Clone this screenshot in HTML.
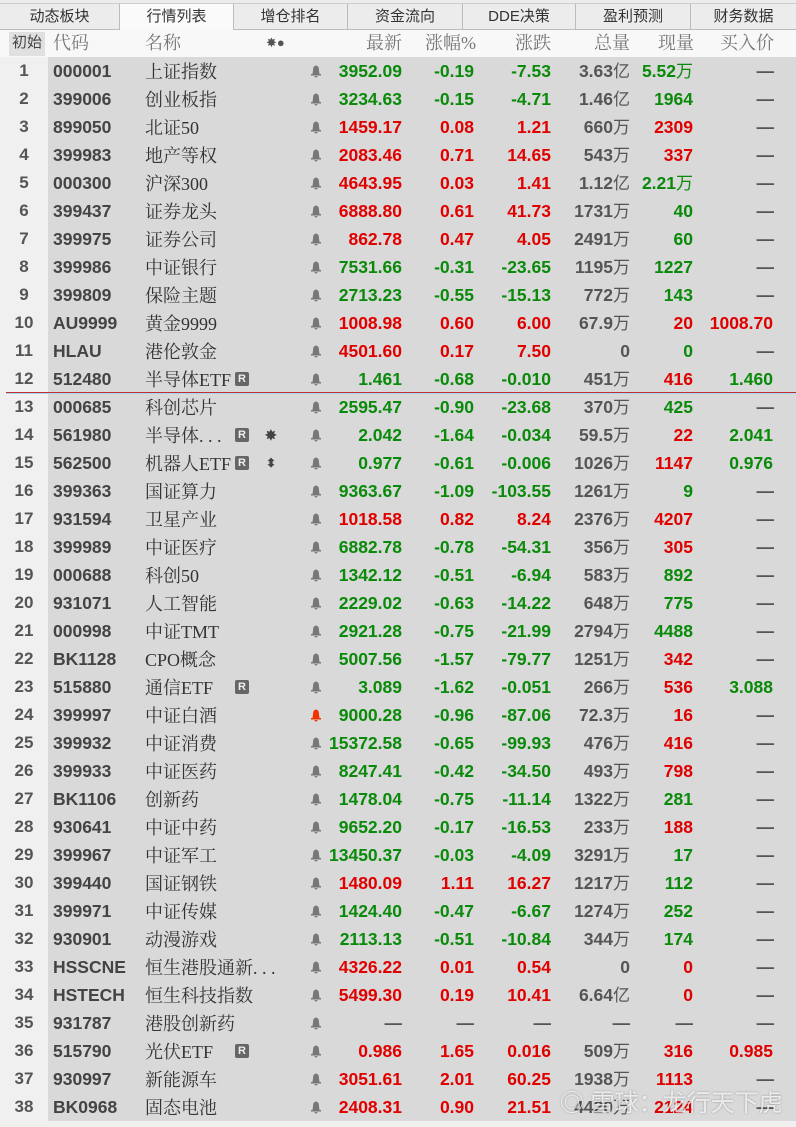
<!DOCTYPE html><html><head><meta charset="utf-8"><style>
*{margin:0;padding:0;box-sizing:border-box}
body{width:796px;height:1127px;background:#f0f0f0;font-family:"Liberation Sans","Noto Sans CJK SC",sans-serif;overflow:hidden;position:relative}
.tabs{position:absolute;left:0;top:0;width:796px;height:30px;background:#ececec;border-bottom:1px solid #bbb}
.tab{position:absolute;top:3px;height:27px;border-left:1px solid #bbb;font-size:15px;color:#333;text-align:center;line-height:25px;border-top:1px solid #ccc}
.tab.a{background:#fafafa}
.hdr{position:absolute;top:30px;left:0;width:796px;height:27px;background:#f8f8f8;color:#777;font-size:18px;font-family:"Liberation Serif","Noto Serif CJK SC",serif}
.hdr span{position:absolute;top:0;line-height:26px}
.r{position:absolute;left:0;width:796px;height:28px;background:#d9d9d9}
.r .i{position:absolute;left:0;top:0;width:48px;height:28px;background:#f0f0f0;text-align:center;font-weight:bold;font-size:17px;color:#555;line-height:28px}
.r span{position:absolute;top:0;line-height:28px;font-weight:bold;font-size:17.5px;white-space:nowrap}
.c{left:53px;color:#444;font-size:17.5px!important}
.n{left:145px;top:1px!important;height:28px;font-family:"Liberation Serif","Noto Serif CJK SC",serif;font-weight:normal!important;font-size:18px!important;color:#333}
.g{color:#0a8a0a}.d{color:#e00000}.k{color:#555}
.R{position:absolute;left:235px;top:7px;width:14px;height:14px;background:#666;color:#eee;font:bold 11px/14px "Liberation Sans";text-align:center;border-radius:2px}
.u{font-weight:normal!important;font-size:17px!important;position:static!important}
</style></head><body>
<div class="tabs">
<div class="tab" style="left:0;width:119px;border-left:none">动态板块</div>
<div class="tab a" style="left:119px;width:114px">行情列表</div>
<div class="tab" style="left:233px;width:114px">增仓排名</div>
<div class="tab" style="left:347px;width:115px">资金流向</div>
<div class="tab" style="left:462px;width:113px">DDE决策</div>
<div class="tab" style="left:575px;width:115px">盈利预测</div>
<div class="tab" style="left:690px;width:106px">财务数据</div>
</div>
<div class="hdr">
<span style="left:9px;top:2px;width:36px;height:24px;background:#e0e0e0;font-size:15px;line-height:22px;text-align:center;color:#444;font-family:'Liberation Sans','Noto Sans CJK SC',sans-serif">初始</span>
<span style="left:53px">代码</span><span style="left:145px">名称</span>
<span style="left:266px;font-size:13px;color:#555">✸●</span>
<span style="right:394px">最新</span><span style="right:320px">涨幅%</span><span style="right:245px">涨跌</span><span style="right:166px">总量</span><span style="right:102px">现量</span><span style="right:22px">买入价</span>
</div>
<div id="rows"></div>
<div style="position:absolute;left:6px;top:392px;width:790px;height:1px;background:#c03030"></div>
<div style="position:absolute;left:6px;top:393px;width:790px;height:1px;background:#a8d8f0"></div>
<div style="position:absolute;left:560px;top:1083px;font-size:24px;color:rgba(255,255,255,.75);font-family:'Liberation Sans','Noto Sans CJK SC',sans-serif;text-shadow:0 0 2px rgba(0,0,0,.3)">◎ 雪球：龙行天下虎</div>
<script>
const D=[
["000001","上证指数","",0,"3952.09","-0.19","-7.53","3.63亿","5.52万","g","—"],
["399006","创业板指","",0,"3234.63","-0.15","-4.71","1.46亿","1964","g","—"],
["899050","北证50","",0,"1459.17","0.08","1.21","660万","2309","d","—"],
["399983","地产等权","",0,"2083.46","0.71","14.65","543万","337","d","—"],
["000300","沪深300","",0,"4643.95","0.03","1.41","1.12亿","2.21万","g","—"],
["399437","证券龙头","",0,"6888.80","0.61","41.73","1731万","40","g","—"],
["399975","证券公司","",0,"862.78","0.47","4.05","2491万","60","g","—"],
["399986","中证银行","",0,"7531.66","-0.31","-23.65","1195万","1227","g","—"],
["399809","保险主题","",0,"2713.23","-0.55","-15.13","772万","143","g","—"],
["AU9999","黄金9999","",0,"1008.98","0.60","6.00","67.9万","20","d","1008.70d"],
["HLAU","港伦敦金","",0,"4501.60","0.17","7.50","0","0","g","—"],
["512480","半导体ETF","R",0,"1.461","-0.68","-0.010","451万","416","d","1.460g"],
["000685","科创芯片","",0,"2595.47","-0.90","-23.68","370万","425","g","—"],
["561980","半导体. . .","R✸",0,"2.042","-1.64","-0.034","59.5万","22","d","2.041g"],
["562500","机器人ETF","R⬍",0,"0.977","-0.61","-0.006","1026万","1147","d","0.976g"],
["399363","国证算力","",0,"9363.67","-1.09","-103.55","1261万","9","g","—"],
["931594","卫星产业","",0,"1018.58","0.82","8.24","2376万","4207","d","—"],
["399989","中证医疗","",0,"6882.78","-0.78","-54.31","356万","305","d","—"],
["000688","科创50","",0,"1342.12","-0.51","-6.94","583万","892","g","—"],
["931071","人工智能","",0,"2229.02","-0.63","-14.22","648万","775","g","—"],
["000998","中证TMT","",0,"2921.28","-0.75","-21.99","2794万","4488","g","—"],
["BK1128","CPO概念","",0,"5007.56","-1.57","-79.77","1251万","342","d","—"],
["515880","通信ETF","R",0,"3.089","-1.62","-0.051","266万","536","d","3.088g"],
["399997","中证白酒","",1,"9000.28","-0.96","-87.06","72.3万","16","d","—"],
["399932","中证消费","",0,"15372.58","-0.65","-99.93","476万","416","d","—"],
["399933","中证医药","",0,"8247.41","-0.42","-34.50","493万","798","d","—"],
["BK1106","创新药","",0,"1478.04","-0.75","-11.14","1322万","281","g","—"],
["930641","中证中药","",0,"9652.20","-0.17","-16.53","233万","188","d","—"],
["399967","中证军工","",0,"13450.37","-0.03","-4.09","3291万","17","g","—"],
["399440","国证钢铁","",0,"1480.09","1.11","16.27","1217万","112","g","—"],
["399971","中证传媒","",0,"1424.40","-0.47","-6.67","1274万","252","g","—"],
["930901","动漫游戏","",0,"2113.13","-0.51","-10.84","344万","174","g","—"],
["HSSCNE","恒生港股通新. . .","",0,"4326.22","0.01","0.54","0","0","d","—"],
["HSTECH","恒生科技指数","",0,"5499.30","0.19","10.41","6.64亿","0","d","—"],
["931787","港股创新药","",0,"—","—","—","—","—","k","—"],
["515790","光伏ETF","R",0,"0.986","1.65","0.016","509万","316","d","0.985d"],
["930997","新能源车","",0,"3051.61","2.01","60.25","1938万","1113","d","—"],
["BK0968","固态电池","",0,"2408.31","0.90","21.51","4420万","2124","d","—"]];
let h="";
function col(v){return v=="—"?"k":(v[0]=="-"?"g":"d")}
function unit(s){return s.replace(/([亿万])/,'<span class="u">$1</span>')}
D.forEach((r,i)=>{
 const y=57+i*28;const c=col(r[5]);
 let ext="";
 if(r[2].startsWith("R"))ext+='<b class="R">R</b>';
 if(r[2]=="R✸")ext+='<span style="left:265px;color:#444;font-size:14px">✸</span>';
 if(r[2]=="R⬍")ext+='<span style="left:266px;color:#444;font-size:12px">⬍</span>';
 let bp=r[10],bc="k";if(bp!="—"){bc=bp.slice(-1);bp=bp.slice(0,-1);}
 h+=`<div class="r" style="top:${y}px"><div class="i">${i+1}</div><span class="c">${r[0]}</span><span class="n">${r[1]}</span>${ext}
 <svg style="position:absolute;left:310px;top:8px" width="12" height="13" viewBox="0 0 12 13"><path d="M6 0.5C3.5 1 3 3 3 5.5L2.5 9H1V10.5H11V9H9.5L9 5.5C9 3 8.5 1 6 0.5ZM4.5 11h3a1.5 1.5 0 0 1-3 0Z" fill="${r[3]?'#ee3300':'#777'}"/></svg>
 <span class="${c}" style="right:394px">${r[4]}</span><span class="${c}" style="right:322px">${r[5]}</span><span class="${c}" style="right:245px">${r[6]}</span>
 <span class="k" style="right:166px">${unit(r[7])}</span><span class="${r[8]=="—"?"k":r[9]}" style="right:103px">${unit(r[8])}</span>
 <span class="${bc}" style="right:${bp=="—"?22:23}px">${bp}</span></div>`;
});
document.getElementById("rows").innerHTML=h;
</script>
</body></html>
